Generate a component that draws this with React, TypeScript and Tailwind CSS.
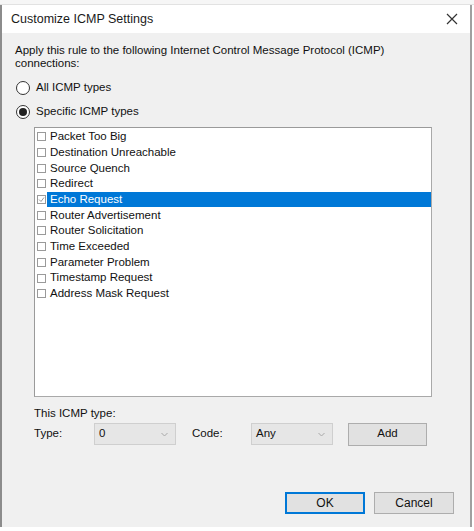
import React from "react";

const items = [
  "Packet Too Big",
  "Destination Unreachable",
  "Source Quench",
  "Redirect",
  "Echo Request",
  "Router Advertisement",
  "Router Solicitation",
  "Time Exceeded",
  "Parameter Problem",
  "Timestamp Request",
  "Address Mask Request",
];

function Radio({ checked, label }: { checked?: boolean; label: string }) {
  return (
    <div className="flex h-[16px] items-center">
      <div className="ml-[1px] flex h-[14px] w-[14px] items-center justify-center rounded-full border border-[#333] bg-white">
        {checked && <div className="h-[8px] w-[8px] rounded-full bg-[#222]" />}
      </div>
      <span className="ml-[6px] text-[11.5px] text-[#111]">{label}</span>
    </div>
  );
}

function Select({ value }: { value: string }) {
  return (
    <div className="flex h-[22px] w-[82px] items-center justify-between border border-[#cfcfcf] bg-[#e6e6e6] pl-[4px] pr-[7px] text-[11.5px] text-[#111]">
      <span>{value}</span>
      <svg width="7" height="5" viewBox="0 0 7 5">
        <path d="M0.5 1 L3.5 4 L6.5 1" fill="none" stroke="#a8a8a8" strokeWidth="1" />
      </svg>
    </div>
  );
}

export default function App() {
  return (
    <div className="flex h-[531px] w-[474px] flex-col bg-white font-['Liberation_Sans',Arial,sans-serif]">
      <div className="h-[5px] border-b border-[#e2e2e2] bg-[#f6f6f6]" />
      <div className="flex h-[522px]">
        <div className="w-[2px] bg-[#8c8c8c]" />
        <div className="flex flex-1 flex-col">
          <div className="flex h-[28px] items-center justify-between bg-white pl-[9px] pr-[12px]">
            <span className="text-[12.5px] text-[#1a1a1a]">Customize ICMP Settings</span>
            <svg width="12" height="12" viewBox="0 0 12 12">
              <path d="M1 1 L11 11 M11 1 L1 11" stroke="#333" strokeWidth="1.2" />
            </svg>
          </div>
          <div className="flex flex-1 flex-col bg-[#f0f0f0] pl-[13px] pr-[16px] pt-[11px]">
            <div className="text-[11.5px] leading-[13px] text-[#111]">
              Apply this rule to the following Internet Control Message Protocol (ICMP)
              <br />
              connections:
            </div>
            <div className="mt-[10px] flex flex-col gap-[8px]">
              <Radio label="All ICMP types" />
              <Radio checked label="Specific ICMP types" />
            </div>
            <div className="ml-[19px] mt-[7px] h-[270px] w-[398px] border border-[#a9a9a9] border-l-[#9a9a9a] border-t-[#9a9a9a] bg-white pt-[1px]">
              {items.map((it) => {
                const sel = it === "Echo Request";
                return (
                  <div key={it} className="flex h-[15.7px] items-center">
                    <div className="ml-[2px] flex h-[9px] w-[9px] items-center justify-center border border-[#9a9a9a] bg-white">
                      {sel && (
                        <svg width="7" height="7" viewBox="0 0 7 7">
                          <path d="M1 3.5 L3 5.5 L6 1.5" fill="none" stroke="#9a9a9a" strokeWidth="1" />
                        </svg>
                      )}
                    </div>
                    <div
                      className={
                        sel
                          ? "ml-[1px] flex h-full flex-1 items-center bg-[#0078d7] pl-[3px] text-[11.5px] text-white"
                          : "ml-[1px] flex h-full flex-1 items-center pl-[3px] text-[11.5px] text-[#111]"
                      }
                    >
                      {it}
                    </div>
                  </div>
                );
              })}
            </div>
            <div className="ml-[19px] mt-[10px] text-[11.5px] leading-[13px] text-[#111]">This ICMP type:</div>
            <div className="ml-[19px] mt-[3px] flex h-[22px] items-center text-[11.5px] text-[#111]">
              <span className="w-[60px]">Type:</span>
              <Select value="0" />
              <span className="ml-[16px] w-[59px]">Code:</span>
              <Select value="Any" />
              <div className="ml-[15px] flex h-[23px] w-[79px] items-center justify-center border border-[#adadad] bg-[#e1e1e1]">
                Add
              </div>
            </div>
            <div className="mt-[47px] flex justify-end gap-[9px]">
              <div className="flex h-[22px] w-[80px] items-center justify-center border-2 border-[#0078d7] bg-[#e1e1e1] text-[12px] text-[#111]">
                OK
              </div>
              <div className="flex h-[22px] w-[80px] items-center justify-center border border-[#adadad] bg-[#e1e1e1] text-[12px] text-[#111]">
                Cancel
              </div>
            </div>
          </div>
        </div>
        <div className="w-[2px] bg-[#a0a0a0]" />
        <div className="w-[2px] bg-white" />
      </div>
    </div>
  );
}
